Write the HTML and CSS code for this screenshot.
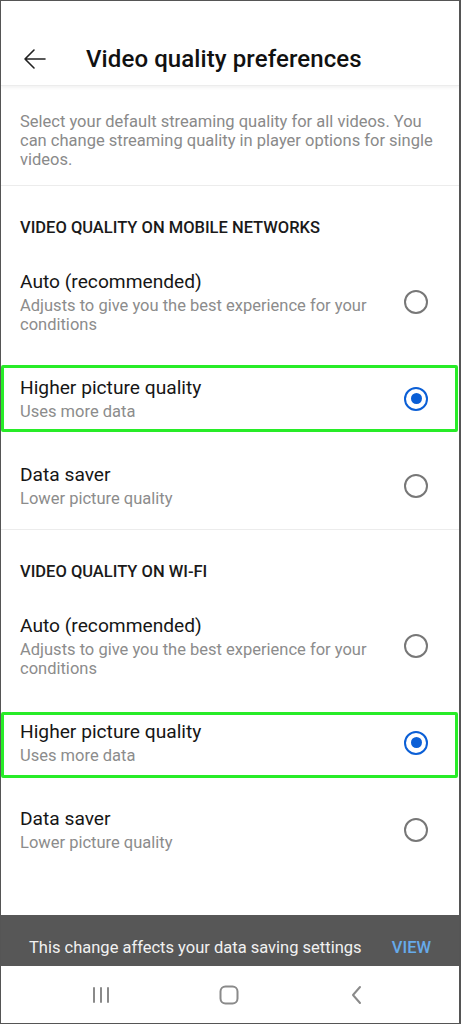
FILE: index.html
```html
<!DOCTYPE html>
<html lang="en">
<head>
  <meta charset="UTF-8" />
  <meta name="viewport" content="width=device-width, initial-scale=1" />
  <title>Video quality preferences</title>
  <link rel="stylesheet" href="styles.css">
</head>
<body>

<div class="screen">
  <header class="topbar">
    <button class="back" aria-label="Back">
      <svg width="24" height="24" viewBox="0 0 24 24" fill="none" stroke="#222" stroke-width="1.6" stroke-linecap="round" stroke-linejoin="round">
        <path d="M22 12H2M11 3l-9 9 9 9"/>
      </svg>
    </button>
    <h1>Video quality preferences</h1>
  </header>

  <main class="content">
    <p class="intro">Select your default streaming quality for all videos. You can change streaming quality in player options for single videos.</p>

    <section class="group">
      <h2>Video quality on mobile networks</h2>
      <div class="option">
        <div class="text">
          <div class="label">Auto (recommended)</div>
          <div class="hint">Adjusts to give you the best experience for your conditions</div>
        </div>
        <span class="radio"></span>
      </div>
      <div class="option marked">
        <div class="text">
          <div class="label">Higher picture quality</div>
          <div class="hint">Uses more data</div>
        </div>
        <span class="radio on"></span>
      </div>
      <div class="option">
        <div class="text">
          <div class="label">Data saver</div>
          <div class="hint">Lower picture quality</div>
        </div>
        <span class="radio"></span>
      </div>
    </section>

    <section class="group">
      <h2>Video quality on Wi-Fi</h2>
      <div class="option">
        <div class="text">
          <div class="label">Auto (recommended)</div>
          <div class="hint">Adjusts to give you the best experience for your conditions</div>
        </div>
        <span class="radio"></span>
      </div>
      <div class="option marked low">
        <div class="text">
          <div class="label">Higher picture quality</div>
          <div class="hint">Uses more data</div>
        </div>
        <span class="radio on"></span>
      </div>
      <div class="option">
        <div class="text">
          <div class="label">Data saver</div>
          <div class="hint">Lower picture quality</div>
        </div>
        <span class="radio"></span>
      </div>
    </section>
  </main>

  <div class="snackbar">
    <span>This change affects your data saving settings</span>
    <a href="#" class="snack-action">VIEW</a>
  </div>

  <nav class="navbar">
    <svg width="20" height="20" viewBox="0 0 20 20" fill="none" stroke="#8a8a8a" stroke-width="2" stroke-linecap="round">
      <path d="M3 3v14M10 3v14M17 3v14"/>
    </svg>
    <svg width="22" height="22" viewBox="0 0 22 22" fill="none" stroke="#8a8a8a" stroke-width="2">
      <rect x="2.5" y="2.5" width="17" height="17" rx="5"/>
    </svg>
    <svg width="20" height="20" viewBox="0 0 20 20" fill="none" stroke="#8a8a8a" stroke-width="2" stroke-linecap="round" stroke-linejoin="round">
      <path d="M13 2l-7 8 7 8"/>
    </svg>
  </nav>
</div>

</body>
</html>
```

FILE: styles.css
```css
* {
  box-sizing: border-box;
}
body {
  margin: 0;
  background: #fff;
  font-family: Roboto, "Noto Sans", sans-serif;
}

.screen {
  width: 461px;
  height: 1024px;
  border: 1px solid #555;
  border-right-width: 2px;
  display: flex;
  flex-direction: column;
  overflow: hidden;
  background: #fff;
}

/* Top bar */
.topbar {
  height: 85px;
  padding: 31px 0 0 18px;
  display: flex;
  align-items: center;
  border-bottom: 1px solid #ececec;
  box-shadow: 0 2px 3px rgba(0,0,0,0.05);
  flex-shrink: 0;
}
.topbar > * {
  height: 54px;
}
.back {
  width: 32px;
  border: none;
  background: none;
  padding: 0;
  display: flex;
  align-items: center;
  justify-content: center;
}
.topbar h1 {
  margin: 0 0 0 35px;
  font-size: 24px;
  font-weight: 500;
  color: #111;
  display: flex;
  align-items: center;
  letter-spacing: 0.1px;
}

.content {
  flex: 1;
}

.intro {
  margin: 0;
  padding: 26px 24px 16px 19px;
  font-size: 16.5px;
  line-height: 19px;
  color: #8a8a8a;
  border-bottom: 1px solid #ececec;
}

.group + .group {
  border-top: 1px solid #ececec;
}
.group h2 {
  margin: 0;
  padding: 32px 19px 11px;
  font-size: 16.5px;
  line-height: 20px;
  font-weight: 500;
  text-transform: uppercase;
  color: #1a1a1a;
}

.option {
  position: relative;
  display: flex;
  align-items: center;
  padding: 21px 31px 21px 19px;
}
.option .text {
  flex: 1;
  padding-right: 30px;
}
.label {
  font-size: 19.2px;
  line-height: 24px;
  color: #161616;
}
.hint {
  margin-top: 2px;
  font-size: 16.5px;
  line-height: 19px;
  color: #8c8c8c;
}

/* annotation frame around the chosen row */
.option.marked::after {
  content: "";
  position: absolute;
  top: 10px;
  bottom: 10px;
  left: 0;
  right: 1px;
  border: 3px solid #28ec28;
  border-radius: 2px;
}
.option.marked.low::after {
  top: 13px;
  bottom: 8px;
}

.radio {
  width: 24px;
  height: 24px;
  border-radius: 50%;
  border: 2px solid #777;
  flex-shrink: 0;
  display: flex;
  align-items: center;
  justify-content: center;
}
.radio.on {
  border: 2.5px solid #0b5fd6;
}
.radio.on::before {
  content: "";
  width: 11px;
  height: 11px;
  border-radius: 50%;
  background: #0b5fd6;
}

/* Snackbar */
.snackbar {
  height: 51px;
  background: #575757;
  display: flex;
  align-items: center;
  justify-content: space-between;
  padding: 13px 28px 0 28px;
  color: #f1f1f1;
  font-size: 16.5px;
  flex-shrink: 0;
}
.snack-action {
  color: #66aaea;
  font-weight: 500;
  font-size: 16.5px;
  text-decoration: none;
}

/* System nav */
.navbar {
  height: 57px;
  display: flex;
  align-items: center;
  justify-content: space-between;
  padding: 0 92px 0 90px;
  flex-shrink: 0;
}
```
